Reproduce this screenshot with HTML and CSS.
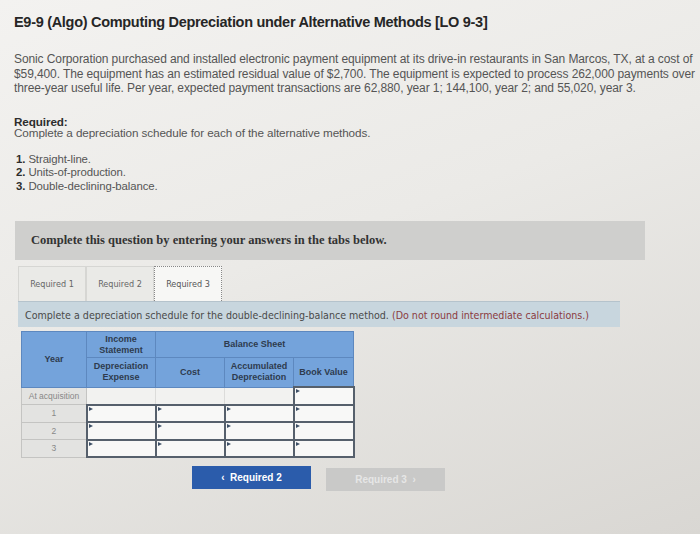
FILE: index.html
```html
<!DOCTYPE html>
<html lang="en">
<head>
  <meta charset="UTF-8">
  <title>E9-9 (Algo) Computing Depreciation</title>
  <link rel="stylesheet" href="styles.css">
</head>
<body>

<div class="page">
  <h1 class="title">E9-9 (Algo) Computing Depreciation under Alternative Methods [LO 9-3]</h1>

  <p class="problem">
    <span>Sonic Corporation purchased and installed electronic payment equipment at its drive-in restaurants in San Marcos, TX, at a cost of</span>
    <span>$59,400. The equipment has an estimated residual value of $2,700. The equipment is expected to process 262,000 payments over</span>
    <span>three-year useful life. Per year, expected payment transactions are 62,880, year 1; 144,100, year 2; and 55,020, year 3.</span>
  </p>

  <div class="required">
    <b>Required:</b>
    <span>Complete a depreciation schedule for each of the alternative methods.</span>
  </div>

  <ul class="methods">
    <li><b>1.</b> Straight-line.</li>
    <li><b>2.</b> Units-of-production.</li>
    <li><b>3.</b> Double-declining-balance.</li>
  </ul>

  <!-- Question panel -->
  <div class="instructions">Complete this question by entering your answers in the tabs below.</div>

  <div class="tabs">
    <div class="tab">Required 1</div>
    <div class="tab">Required 2</div>
    <div class="tab active">Required 3</div>
  </div>

  <div class="tab-body">
    <div class="note">Complete a depreciation schedule for the double-declining-balance method. <span class="hint">(Do not round intermediate calculations.)</span></div>

    <table class="schedule">
      <tr>
        <th rowspan="2" class="col-year">Year</th>
        <th>Income<br>Statement</th>
        <th colspan="3">Balance Sheet</th>
      </tr>
      <tr>
        <th>Depreciation<br>Expense</th>
        <th>Cost</th>
        <th>Accumulated<br>Depreciation</th>
        <th>Book Value</th>
      </tr>
      <tr>
        <td class="year">At acquisition</td>
        <td class="blank"></td>
        <td class="blank"></td>
        <td class="blank"></td>
        <td class="input"></td>
      </tr>
      <tr>
        <td class="year">1</td>
        <td class="input"></td>
        <td class="input"></td>
        <td class="input"></td>
        <td class="input"></td>
      </tr>
      <tr>
        <td class="year">2</td>
        <td class="input"></td>
        <td class="input"></td>
        <td class="input"></td>
        <td class="input"></td>
      </tr>
      <tr>
        <td class="year">3</td>
        <td class="input"></td>
        <td class="input"></td>
        <td class="input"></td>
        <td class="input"></td>
      </tr>
    </table>

    <div class="nav">
      <button class="nav-btn prev">&#8249;&nbsp;&nbsp;Required 2</button>
      <button class="nav-btn next" disabled>Required 3&nbsp;&nbsp;&#8250;</button>
    </div>
  </div>
</div>

</body>
</html>
```

FILE: styles.css
```css
body {
  margin: 0;
  padding: 0;
  background: linear-gradient(160deg, #f3f2f0 0%, #ebeae7 45%, #d9d7d3 100%);
  font-family: "Liberation Sans", Arial, sans-serif;
  overflow: hidden;
  height: 534px;
}

.page {
  padding: 14px 0 0 14px;
}

.title {
  margin: 0;
  font-size: 14.5px;
  font-weight: bold;
  color: #262626;
  letter-spacing: -0.3px;
  white-space: nowrap;
}

/* Problem text */
.problem {
  margin: 22px 0 0 0;
  font-size: 12px;
  line-height: 14.5px;
  color: #555;
  letter-spacing: -0.1px;
  white-space: nowrap;
}

.problem span {
  display: block;
}

.required {
  margin-top: 20px;
  font-size: 11.7px;
  line-height: 11.5px;
  color: #555;
  letter-spacing: -0.1px;
}

.required b {
  display: block;
  color: #2d2d2d;
}

.methods {
  list-style: none;
  margin: 14px 0 0 2px;
  padding: 0;
  font-size: 11.4px;
  line-height: 13.5px;
  color: #555;
  letter-spacing: -0.1px;
}

.methods b {
  color: #2d2d2d;
}

/* Question panel */
.instructions {
  margin: 28px 0 0 1px;
  width: 630px;
  height: 39px;
  padding-left: 16px;
  box-sizing: border-box;
  display: flex;
  align-items: center;
  background: #cfcfcd;
  font-family: "Liberation Serif", "Times New Roman", serif;
  font-size: 12.5px;
  font-weight: bold;
  color: #333;
}

.tabs {
  display: flex;
  margin: 6px 0 0 4px;
  height: 35px;
}

.tab {
  width: 68px;
  height: 35px;
  box-sizing: border-box;
  display: flex;
  align-items: center;
  justify-content: center;
  background: #eaeae7;
  border: 1px solid #d6d6d3;
  border-bottom: none;
  font-family: "DejaVu Sans Condensed", "DejaVu Sans", sans-serif;
  font-size: 9px;
  color: #666;
}

.tab.active {
  background: #f7f7f5;
  border: 1px dotted #888;
  border-bottom: none;
  color: #555;
}

.tab-body {
  margin-left: 4px;
}

.note {
  width: 602px;
  height: 26px;
  box-sizing: border-box;
  padding-left: 7px;
  display: flex;
  align-items: center;
  background: #c8d6de;
  border-top: 1px solid #b5c3cc;
  font-family: "DejaVu Sans Condensed", "DejaVu Sans", sans-serif;
  font-size: 10.6px;
  color: #4a4a4a;
  white-space: pre;
}

.note .hint {
  color: #8b3b3e;
}

/* Schedule table */
.schedule {
  margin: 4px 0 0 3px;
  border-collapse: collapse;
  font-family: "Liberation Sans", Arial, sans-serif;
  font-size: 9px;
}

.schedule th {
  background: #74a3db;
  color: #2e3b4e;
  font-weight: bold;
  border: 1px solid #5d88bf;
  line-height: 11px;
  padding: 0;
  height: 25px;
}

.schedule th.col-year {
  width: 64px;
}

.schedule tr:nth-child(2) th {
  height: 28px;
}

.schedule tr:nth-child(2) th:nth-child(1),
.schedule tr:nth-child(2) th:nth-child(2),
.schedule tr:nth-child(2) th:nth-child(3) {
  width: 68px;
}

.schedule tr:nth-child(2) th:nth-child(4) {
  width: 59px;
}

.schedule td {
  height: 15.5px;
  padding: 0;
}

.schedule td.year {
  background: #e3e3e1;
  border: 1px solid #c4c4c2;
  color: #888;
  text-align: center;
  font-size: 8.5px;
}

.schedule td.blank {
  background: #f2f2f0;
  border: 1px solid #dcdcda;
}

.schedule td.input {
  position: relative;
  background: #f8f8f7;
  border: 2px solid #56606c;
}

/* little marker in the corner of each entry cell */
.schedule td.input::before {
  content: "";
  position: absolute;
  top: 1px;
  left: 1px;
  border-left: 4px solid #3d4f66;
  border-top: 2px solid transparent;
  border-bottom: 2px solid transparent;
}

.nav {
  display: flex;
  gap: 15px;
  margin: 8px 0 0 174px;
}

.nav-btn {
  width: 119px;
  height: 23px;
  border: none;
  font-family: "Liberation Sans", Arial, sans-serif;
  font-size: 10px;
  font-weight: bold;
}

.nav-btn.prev {
  background: #2b5cab;
  color: #fff;
}

.nav-btn.next {
  margin-top: 2px;
  background: #c9c9c8;
  color: #e6e6e6;
}
```
